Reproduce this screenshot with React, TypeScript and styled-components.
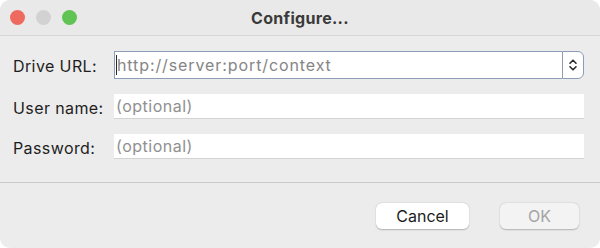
import styled, { createGlobalStyle } from 'styled-components';

const GlobalStyle = createGlobalStyle`
  html, body {
    margin: 0;
    padding: 0;
    background: #ffffff;
  }
  body {
    font-family: Inter, "Liberation Sans", sans-serif;
    -webkit-font-smoothing: antialiased;
  }
`;

const Window = styled.div`
  width: 600px;
  height: 248px;
  background: #ececec;
  border-radius: 10px;
  overflow: hidden;
  display: flex;
  flex-direction: column;
  box-sizing: border-box;
`;

const TitleBar = styled.div`
  position: relative;
  height: 35px;
  flex-shrink: 0;
  display: flex;
  align-items: center;
  justify-content: center;
  background: #e9e9e9;
  border-bottom: 1px solid #d6d6d6;
`;

const Lights = styled.div`
  position: absolute;
  left: 10px;
  top: 10px;
  display: flex;
  gap: 11px;
`;

const Light = styled.span<{ $color: string }>`
  width: 15px;
  height: 15px;
  border-radius: 50%;
  background: ${(p) => p.$color};
`;

const Title = styled.h1`
  margin: 0;
  font-size: 16px;
  font-weight: 700;
  letter-spacing: 0.3px;
  color: #3a3a3a;
`;

const Form = styled.div`
  display: grid;
  grid-template-columns: 101px 1fr;
  row-gap: 15px;
  align-items: center;
  padding: 15px 16px 23px 13px;
  border-bottom: 1px solid #c9c9c9;
`;

const Label = styled.label`
  font-size: 16px;
  letter-spacing: 0.4px;
  color: #1e1e1e;
  padding-top: 2px;
`;

const Combo = styled.div`
  display: flex;
  height: 28px;
`;

const ComboInput = styled.div`
  position: relative;
  flex: 1;
  display: flex;
  align-items: center;
  padding-left: 2px;
  background: #ffffff;
  border: 1.5px solid #8d9db5;
  border-right: none;
  font-size: 16px;
  letter-spacing: 0.9px;
  color: #858585;
`;

const Caret = styled.span`
  position: absolute;
  left: 1px;
  top: 3px;
  bottom: 3px;
  width: 1px;
  background: #2a2a2a;
`;

const ComboButton = styled.div`
  width: 20px;
  display: flex;
  align-items: center;
  justify-content: center;
  background: #ffffff;
  border: 1.5px solid #8d9db5;
  border-radius: 0 6px 6px 0;
  color: #333;
`;

const Field = styled.div`
  height: 25px;
  display: flex;
  align-items: center;
  padding-left: 2px;
  background: #ffffff;
  border-bottom: 1px solid #d3d3d3;
  box-sizing: border-box;
  font-size: 16px;
  letter-spacing: 0.5px;
  color: #8f8f8f;
`;

const Footer = styled.div`
  display: flex;
  justify-content: flex-end;
  gap: 31px;
  padding: 20px 21px 0 0;
`;

const Button = styled.button<{ $disabled?: boolean; $width: number }>`
  width: ${(p) => p.$width}px;
  height: 26px;
  border: none;
  border-radius: 6px;
  font-family: Inter, "Liberation Sans", sans-serif;
  font-size: 16px;
  background: ${(p) => (p.$disabled ? '#f3f3f3' : '#ffffff')};
  color: ${(p) => (p.$disabled ? '#a3a3a3' : '#1c1c1c')};
  box-shadow: 0 0.5px 1.5px rgba(0, 0, 0, 0.25);
  padding: 0;
`;

function Chevrons() {
  return (
    <svg width="10" height="14" viewBox="0 0 10 14" fill="none" stroke="#2b2b2b" strokeWidth="1.6" strokeLinecap="round" strokeLinejoin="round">
      <path d="M2 5.2 L5 2.2 L8 5.2" />
      <path d="M2 8.8 L5 11.8 L8 8.8" />
    </svg>
  );
}

export default function App() {
  return (
    <>
      <GlobalStyle />
      <Window>
        <TitleBar>
          <Lights>
            <Light $color="#ee6a5f" />
            <Light $color="#d2d2d2" />
            <Light $color="#5fc454" />
          </Lights>
          <Title>Configure...</Title>
        </TitleBar>
        <Form>
          <Label>Drive URL:</Label>
          <Combo>
            <ComboInput>
              <Caret />
              http://server:port/context
            </ComboInput>
            <ComboButton>
              <Chevrons />
            </ComboButton>
          </Combo>
          <Label>User name:</Label>
          <Field>(optional)</Field>
          <Label>Password:</Label>
          <Field>(optional)</Field>
        </Form>
        <Footer>
          <Button $width={93}>Cancel</Button>
          <Button $width={79} $disabled>
            OK
          </Button>
        </Footer>
      </Window>
    </>
  );
}
